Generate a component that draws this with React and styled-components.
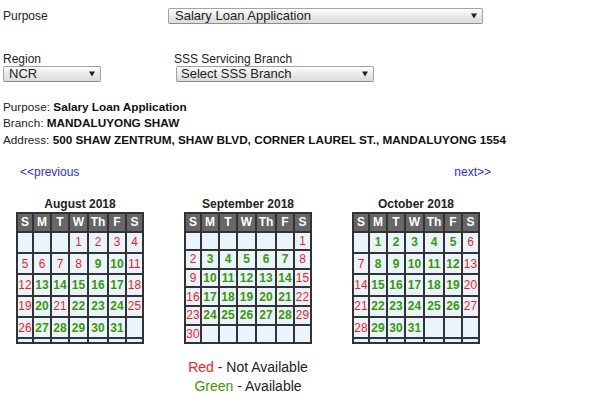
import React from "react";
import styled, { createGlobalStyle } from "styled-components";

const GlobalStyle = createGlobalStyle`
  html, body { margin: 0; padding: 0; background: #fff; }
  body {
    font-family: "Liberation Sans", Arial, Helvetica, sans-serif;
    font-size: 12px;
    color: #222;
  }
`;

const Page = styled.div`
  width: 607px;
  padding-left: 3px;
  box-sizing: border-box;
`;

const PurposeRow = styled.div`
  display: flex;
  align-items: center;
  margin-top: 8px;
  height: 16px;
`;

const Label = styled.div`
  font-size: 12px;
  line-height: 14px;
  width: ${(p) => p.$w || "auto"};
  flex: none;
`;

const FieldRow = styled.div`
  display: flex;
  margin-top: 28px;
`;

const Field = styled.div`
  display: flex;
  flex-direction: column;
  width: ${(p) => p.$w};
  flex: none;
`;

const SelectBox = styled.div`
  position: relative;
  width: ${(p) => p.$w}px;
  height: 16px;
  margin-left: ${(p) => p.$ml || 0}px;
  flex: none;
`;

const NativeSelect = styled.select`
  appearance: none;
  -webkit-appearance: none;
  box-sizing: border-box;
  width: 100%;
  height: 16px;
  margin: 0;
  padding: 0 0 0 ${(p) => p.$pad}px;
  font-family: "Liberation Sans", Arial, sans-serif;
  font-size: 13px;
  line-height: 14px;
  color: #222;
  border: 1px solid #a3a3a3;
  border-bottom-color: #8d8d8d;
  border-radius: 2px;
  background: linear-gradient(#fdfdfd, #e6e6e6 60%, #dcdcdc);
  outline: none;
`;

const Arrow = styled.span`
  position: absolute;
  right: 6px;
  top: 5px;
  width: 6px;
  height: 6px;
  pointer-events: none;
  display: flex;
`;

const Info = styled.div`
  margin-top: 16.5px;
  line-height: 16.5px;
  font-size: 11.75px;
`;

const Strong = styled.b`
  font-weight: bold;
  color: #111;
`;

const Nav = styled.div`
  display: flex;
  justify-content: space-between;
  width: 471px;
  margin: 16.5px 0 0 17px;
  line-height: 14px;
`;

const NavLink = styled.a`
  color: #2b2bf0;
  text-decoration: none;
  font-size: 12px;
  cursor: pointer;
`;

const Calendars = styled.div`
  display: flex;
  gap: 40px;
  margin: 18px 0 0 13px;
`;

const Month = styled.div`
  display: flex;
  flex-direction: column;
  align-items: center;
  width: 128px;
`;

const MonthTitle = styled.div`
  font-weight: bold;
  font-size: 12px;
  line-height: 14px;
  color: #222;
  margin-bottom: 1px;
`;

const Table = styled.table`
  border-collapse: separate;
  border-spacing: 2px;
  background: #333;
  width: 128px;
  table-layout: fixed;
`;

const HeadCell = styled.th`
  background: #666;
  color: #fff;
  font-weight: bold;
  font-size: 12px;
  height: 17px;
  padding: 0;
  text-align: center;
  line-height: 14px;
`;

const DayRow = styled.tr`
  height: ${(p) => p.$h}px;
`;

const DayCell = styled.td`
  background: #e9f4fc;
  padding: 0;
  text-align: center;
  vertical-align: middle;
  font-size: ${(p) => (p.$thin ? 0 : 12)}px;
  line-height: ${(p) => (p.$thin ? 0 : 14)}px;
  height: ${(p) => p.$h}px;
  color: ${(p) => (p.$tone === "g" ? "#3a9900" : "#ff1a1a")};
  font-weight: ${(p) => (p.$tone === "g" ? "bold" : "normal")};
`;

const Legend = styled.div`
  width: 464px;
  margin: 14px 0 0 13px;
  text-align: center;
  font-size: 14px;
  line-height: 19px;
  color: #222;
`;

const Red = styled.span`
  color: #ff1a1a;
`;
const Green = styled.span`
  color: #3a9900;
`;

const colWidths = [14, 16, 16, 17, 18, 16, 15];
const heads = ["S", "M", "T", "W", "Th", "F", "S"];

function range(a, b) {
  const r = [];
  for (let i = a; i <= b; i++) r.push(i);
  return r;
}

const months = [
  {
    title: "August 2018",
    start: 3,
    days: 31,
    green: [9, 10, ...range(13, 17), 20, 22, 23, 24, ...range(27, 31)],
  },
  {
    title: "September 2018",
    start: 6,
    days: 30,
    green: [...range(3, 7), ...range(10, 14), ...range(17, 21), ...range(24, 28)],
  },
  {
    title: "October 2018",
    start: 1,
    days: 31,
    green: [...range(1, 5), ...range(8, 12), ...range(15, 19), ...range(22, 26), ...range(29, 31)],
  },
];

function buildWeeks(m) {
  const cells = [];
  for (let i = 0; i < m.start; i++) cells.push(null);
  for (let d = 1; d <= m.days; d++) cells.push(d);
  while (cells.length < 42) cells.push(null);
  const weeks = [];
  for (let w = 0; w < 6; w++) weeks.push(cells.slice(w * 7, w * 7 + 7));
  return weeks;
}

function DownArrow() {
  return (
    <svg width="6" height="6" viewBox="0 0 6 6">
      <path d="M0 0.5 H6 L3 5.5 Z" fill="#222" />
    </svg>
  );
}

function Select({ w, pad, ml, value }) {
  return (
    <SelectBox $w={w} $ml={ml}>
      <NativeSelect $pad={pad} defaultValue={value}>
        <option value={value}>{value}</option>
      </NativeSelect>
      <Arrow>
        <DownArrow />
      </Arrow>
    </SelectBox>
  );
}

function Calendar({ m }) {
  const weeks = buildWeeks(m);
  const lastEmpty = weeks[5].every((c) => c === null);
  const rowH = lastEmpty ? 19.4 : 16.67;
  return (
    <Month>
      <MonthTitle>{m.title}</MonthTitle>
      <Table>
        <colgroup>
          {colWidths.map((w, i) => (
            <col key={i} style={{ width: w }} />
          ))}
        </colgroup>
        <thead>
          <tr>
            {heads.map((h, i) => (
              <HeadCell key={i}>{h}</HeadCell>
            ))}
          </tr>
        </thead>
        <tbody>
          {weeks.map((wk, wi) => {
            const thin = lastEmpty && wi === 5;
            const h = thin ? 3 : rowH;
            return (
              <DayRow key={wi} $h={h}>
                {wk.map((d, di) => {
                  const tone =
                    d && m.green.includes(d) ? "g" : "r";
                  return (
                    <DayCell key={di} $h={h} $thin={thin} $tone={tone}>
                      {d || ""}
                    </DayCell>
                  );
                })}
              </DayRow>
            );
          })}
        </tbody>
      </Table>
    </Month>
  );
}

export default function App() {
  return (
    <Page>
      <GlobalStyle />
      <PurposeRow>
        <Label $w="165px">Purpose</Label>
        <Select w={315} pad={6} value="Salary Loan Application" />
      </PurposeRow>

      <FieldRow>
        <Field $w="171px">
          <Label>Region</Label>
          <Select w={98} pad={5} value="NCR" />
        </Field>
        <Field $w="210px">
          <Label>SSS Servicing Branch</Label>
          <Select w={198} pad={4} ml={2} value="Select SSS Branch" />
        </Field>
      </FieldRow>

      <Info>
        <div>
          Purpose: <Strong>Salary Loan Application</Strong>
        </div>
        <div>
          Branch: <Strong>MANDALUYONG SHAW</Strong>
        </div>
        <div>
          Address:{" "}
          <Strong>500 SHAW ZENTRUM, SHAW BLVD, CORNER LAUREL ST., MANDALUYONG 1554</Strong>
        </div>
      </Info>

      <Nav>
        <NavLink>&lt;&lt;previous</NavLink>
        <NavLink>next&gt;&gt;</NavLink>
      </Nav>

      <Calendars>
        {months.map((m) => (
          <Calendar key={m.title} m={m} />
        ))}
      </Calendars>

      <Legend>
        <div>
          <Red>Red</Red> - Not Available
        </div>
        <div>
          <Green>Green</Green> - Available
        </div>
      </Legend>
    </Page>
  );
}
